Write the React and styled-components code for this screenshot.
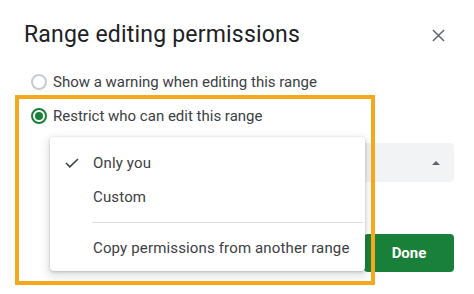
import React from 'react';
import styled, { createGlobalStyle } from 'styled-components';

const GlobalStyle = createGlobalStyle`
  body {
    margin: 0;
    background: #ffffff;
    font-family: Roboto, 'Liberation Sans', Arial, sans-serif;
    color: #3c4043;
  }
`;

const Page = styled.div`
  position: relative;
  width: 474px;
  height: 294px;
  overflow: hidden;
  background: #ffffff;
`;

const Dialog = styled.div`
  display: flex;
  flex-direction: column;
  padding: 21px 20px 0 24px;
`;

const Header = styled.div`
  display: flex;
  align-items: center;
  justify-content: space-between;
  height: 28px;
`;

const Title = styled.h2`
  margin: 0;
  font-size: 23px;
  font-weight: 400;
  letter-spacing: 0.2px;
  line-height: 28px;
  color: #202124;
`;

const CloseButton = styled.button`
  display: flex;
  align-items: center;
  justify-content: center;
  width: 24px;
  height: 24px;
  padding: 0;
  margin-right: 4px;
  border: none;
  background: transparent;
  cursor: pointer;
`;

const RadioList = styled.div`
  display: flex;
  flex-direction: column;
  row-gap: 10px;
  margin-top: 21px;
  padding-left: 7px;
`;

const RadioRow = styled.label`
  display: flex;
  align-items: center;
  column-gap: 6px;
  height: 24px;
  font-size: 15px;
  color: #3c4043;
`;

const RadioCircle = styled.span`
  box-sizing: border-box;
  display: flex;
  align-items: center;
  justify-content: center;
  width: 16px;
  height: 16px;
  border-radius: 50%;
  border: 2px solid ${(p) => (p.checked ? '#188038' : '#c8cbcf')};

  &::after {
    content: '';
    display: ${(p) => (p.checked ? 'block' : 'none')};
    width: 8px;
    height: 8px;
    border-radius: 50%;
    background: #188038;
  }
`;

const SelectArea = styled.div`
  position: relative;
  margin-top: 15px;
  margin-left: 27px;
`;

const SelectBox = styled.div`
  display: flex;
  align-items: center;
  justify-content: flex-end;
  height: 39px;
  padding-right: 14px;
  border-radius: 4px;
  background: #f1f3f4;
`;

const Arrow = styled.span`
  width: 0;
  height: 0;
  border-left: 4px solid transparent;
  border-right: 4px solid transparent;
  border-bottom: 4px solid #5f6368;
`;

const Menu = styled.div`
  position: absolute;
  left: -1px;
  top: -6px;
  width: 315px;
  display: flex;
  flex-direction: column;
  padding: 9px 0 6px;
  border-radius: 4px;
  background: #ffffff;
  box-shadow: 0 1px 3px rgba(60, 64, 67, 0.3), 0 4px 8px 3px rgba(60, 64, 67, 0.12);
  z-index: 2;
`;

const MenuItem = styled.div`
  display: flex;
  align-items: center;
  height: 34px;
  font-size: 15px;
  letter-spacing: 0.15px;
  color: #3c4043;
`;

const CheckSlot = styled.span`
  display: flex;
  align-items: center;
  justify-content: center;
  width: 43px;
`;

const Divider = styled.div`
  height: 1px;
  margin: 8px 2px 8px 42px;
  background: #dadce0;
`;

const Footer = styled.div`
  display: flex;
  justify-content: flex-end;
  margin-top: 52px;
`;

const DoneButton = styled.button`
  width: 90px;
  height: 38px;
  border: none;
  border-radius: 4px;
  background: #188038;
  color: #ffffff;
  font-family: Roboto, 'Liberation Sans', Arial, sans-serif;
  font-size: 15px;
  font-weight: 700;
`;

const Highlight = styled.div`
  position: absolute;
  left: 15px;
  top: 95px;
  width: 360px;
  height: 190px;
  box-sizing: border-box;
  border: 4px solid #f5a81c;
  pointer-events: none;
  z-index: 3;
`;

function CloseIcon() {
  return (
    <svg width="13" height="13" viewBox="0 0 14 14">
      <path d="M1 1 L13 13 M13 1 L1 13" stroke="#5f6368" strokeWidth="1.6" fill="none" />
    </svg>
  );
}

function CheckIcon() {
  return (
    <svg width="14" height="10" viewBox="0 0 14 10">
      <path d="M1 5 L4.8 8.8 L13 1" stroke="#3c4043" strokeWidth="1.6" fill="none" />
    </svg>
  );
}

const options = [
  { label: 'Show a warning when editing this range', checked: false },
  { label: 'Restrict who can edit this range', checked: true }
];

export default function App() {
  return (
    <Page>
      <GlobalStyle />
      <Dialog>
        <Header>
          <Title>Range editing permissions</Title>
          <CloseButton aria-label="Close">
            <CloseIcon />
          </CloseButton>
        </Header>
        <RadioList>
          {options.map((o) => (
            <RadioRow key={o.label}>
              <RadioCircle checked={o.checked} />
              {o.label}
            </RadioRow>
          ))}
        </RadioList>
        <SelectArea>
          <SelectBox>
            <Arrow />
          </SelectBox>
          <Menu>
            <MenuItem>
              <CheckSlot>
                <CheckIcon />
              </CheckSlot>
              Only you
            </MenuItem>
            <MenuItem>
              <CheckSlot />
              Custom
            </MenuItem>
            <Divider />
            <MenuItem>
              <CheckSlot />
              Copy permissions from another range
            </MenuItem>
          </Menu>
        </SelectArea>
        <Footer>
          <DoneButton>Done</DoneButton>
        </Footer>
      </Dialog>
      <Highlight />
    </Page>
  );
}
